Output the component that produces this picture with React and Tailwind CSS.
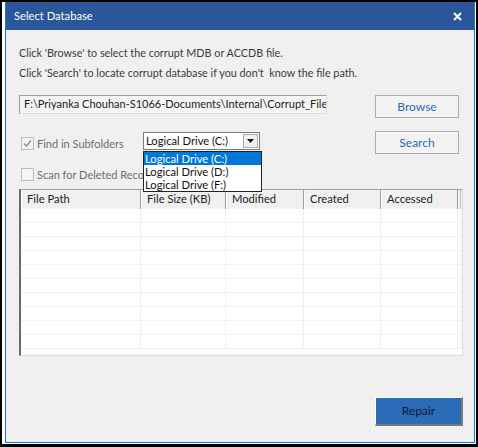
import React from 'react';

const font = { fontFamily: 'Lato, "Noto Sans", sans-serif' };

const columns = [
  { label: 'File Path', w: 'w-[120px]' },
  { label: 'File Size (KB)', w: 'w-[85px]' },
  { label: 'Modified', w: 'w-[78px]' },
  { label: 'Created', w: 'w-[77px]' },
  { label: 'Accessed', w: 'w-[77px]' },
];

function CheckBox({ checked }) {
  return (
    <div className="flex h-[13px] w-[13px] shrink-0 items-center justify-center border border-[#bcbcbc] bg-[#f4f4f4]">
      {checked && (
        <svg width="9" height="9" viewBox="0 0 9 9">
          <path d="M1 4.5 L3.5 7 L8 1.5" fill="none" stroke="#8a8a8a" strokeWidth="1.3" />
        </svg>
      )}
    </div>
  );
}

function WinButton({ children, className = '' }) {
  return (
    <button className={`flex items-center justify-center border border-[#adadad] bg-[#f3f3f3] text-[12px] text-[#1f6bc4] ${className}`}>
      {children}
    </button>
  );
}

export default function App() {
  const rows = Array.from({ length: 10 });

  return (
    <div className="h-[447px] w-[478px] overflow-hidden border-t-[2px] border-r-[2px] border-b-[3px] border-l-[2px] border-black bg-white" style={font}>
      <div className="ml-[3px] mr-[1px] flex h-[441px] flex-col border border-t-0 border-[#1a73d0] bg-[#f0f0f0]">
        {/* Title bar */}
        <div className="flex h-[28px] shrink-0 items-center justify-between bg-[#2b579a] pl-[8px] pr-[12px]">
          <span className="text-[11.2px] text-white">Select Database</span>
          <svg width="9" height="9" viewBox="0 0 9 9">
            <path d="M1 1 L8 8 M8 1 L1 8" stroke="white" strokeWidth="2" />
          </svg>
        </div>

        <div className="flex flex-1 flex-col pl-[13px] pr-[11px] pt-[13px] text-[11px] text-[#3b3b3b]">
          <p className="h-[20px] text-[10.8px] leading-[20px]">Click 'Browse' to select the corrupt MDB or ACCDB file.</p>
          <p className="h-[20px] text-[10.8px] leading-[20px]">Click 'Search' to locate corrupt database if you don't&nbsp; know the file path.</p>

          {/* Path row */}
          <div className="mt-[12px] flex h-[23px] items-start justify-between">
            <div className="flex h-[19px] w-[308px] items-center overflow-hidden whitespace-nowrap border border-t-[#a0a0a0] border-l-[#a0a0a0] border-r-[#dcdcdc] border-b-[#dcdcdc] bg-[#f4f4f4] pl-[4px] text-[11px] text-[#222]">
              F:\Priyanka Chouhan-S1066-Documents\Internal\Corrupt_Files
            </div>
            <WinButton className="mr-[4px] h-[23px] w-[84px]">Browse</WinButton>
          </div>

          {/* Search row */}
          <div className="mt-[13px] flex h-[23px] items-start justify-between">
            <div className="flex items-start">
              <div className="mt-[6px] ml-[2px] flex w-[122px] items-center gap-[3px] text-[11px] text-[#6d6d6d]">
                <CheckBox checked />
                <span className="leading-[13px]">Find in Subfolders</span>
              </div>
              <div className="relative mt-[1px] text-[11.2px]">
                <div className="flex h-[18px] w-[117px] items-center justify-between border border-[#7a7a7a] bg-white pl-[2px] text-[#111]">
                  <span className="leading-[16px]">Logical Drive (C:)</span>
                  <div className="mr-[1px] flex h-[14px] w-[15px] items-center justify-center border border-[#adadad] bg-[#f0f0f0]">
                    <svg width="7" height="4" viewBox="0 0 7 4">
                      <path d="M0 0 L7 0 L3.5 4 Z" fill="#111" />
                    </svg>
                  </div>
                </div>
                <div className="absolute left-0 top-[19px] z-10 flex w-[119px] flex-col border border-[#222] bg-white leading-[13px] text-[#111]">
                  <span className="h-[13px] bg-[#0078d7] pl-[1px] text-white">Logical Drive (C:)</span>
                  <span className="h-[13px] pl-[1px]">Logical Drive (D:)</span>
                  <span className="h-[13px] pl-[1px]">Logical Drive (F:)</span>
                </div>
              </div>
            </div>
            <WinButton className="mr-[4px] h-[23px] w-[84px]">Search</WinButton>
          </div>

          {/* Deleted records */}
          <div className="mt-[14px] ml-[2px] flex h-[13px] items-center gap-[3px] text-[11px] text-[#6d6d6d]">
            <CheckBox />
            <span className="whitespace-nowrap leading-[13px]">Scan for Deleted Records</span>
          </div>

          {/* Table */}
          <div className="mt-[8px] flex h-[167px] flex-col overflow-hidden border border-t-[#a0a0a0] border-l-[#6a6a6a] border-l-2 border-r-[#dcdcdc] border-b-[#dcdcdc] bg-white text-[11.2px]">
            <div className="flex h-[19px] shrink-0 bg-[#f0f0f0]">
              {columns.map((c) => (
                <div key={c.label} className={`${c.w} flex items-center border-r border-r-[#a0a0a0] border-l border-l-white pl-[5px] text-[#222]`}>
                  {c.label}
                </div>
              ))}
              <div className="w-[3px] border-r border-r-[#c8c8c8]" />
            </div>
            {rows.map((_, i) => (
              <div key={i} className="flex h-[14px] shrink-0 border-b border-[#f0f0f0]">
                {columns.map((c) => (
                  <div key={c.label} className={`${c.w} border-r border-[#f0f0f0]`} />
                ))}
                <div className="w-[3px] border-r border-[#f0f0f0]" />
              </div>
            ))}
          </div>

          {/* Repair */}
          <div className="mt-[41px] flex justify-end">
            <button className="flex h-[29px] w-[88px] items-center justify-center border border-t-white border-l-white border-r-[#7a7a7a] border-b-[#7a7a7a] border-r-2 border-b-2 bg-[#2b6bb8] text-[12px] text-[#0d1a30]">
              Repair
            </button>
          </div>
        </div>
      </div>
    </div>
  );
}
